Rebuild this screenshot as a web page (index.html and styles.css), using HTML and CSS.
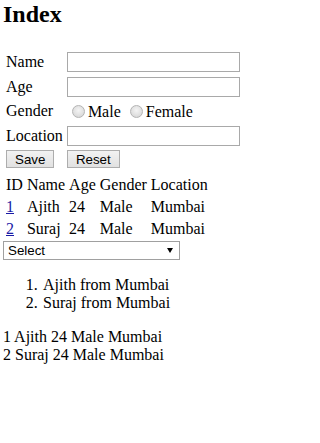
FILE: index.html
```html
<!DOCTYPE html>
<html lang="en">
<head>
  <meta charset="UTF-8">
  <meta name="viewport" content="width=device-width, initial-scale=1.0">
  <title>Index</title>
  <link rel="stylesheet" href="styles.css">
</head>
<body>
  <h2>Index</h2>

  <form class="person-form">
    <table class="form-table">
      <tr>
        <td>Name</td>
        <td><input type="text" class="field" name="Name"></td>
      </tr>
      <tr>
        <td>Age</td>
        <td><input type="text" class="field" name="Age"></td>
      </tr>
      <tr class="gender-row">
        <td>Gender</td>
        <td>
          <input type="radio" class="radio" name="Gender" value="Male">Male
          <input type="radio" class="radio" name="Gender" value="Female">Female
        </td>
      </tr>
      <tr>
        <td>Location</td>
        <td><input type="text" class="field" name="Location"></td>
      </tr>
      <tr class="button-row">
        <td><button type="button" class="btn">Save</button></td>
        <td><button type="reset" class="btn">Reset</button></td>
      </tr>
    </table>
  </form>

  <table class="people">
    <tr>
      <td>ID</td>
      <td>Name</td>
      <td>Age</td>
      <td>Gender</td>
      <td>Location</td>
    </tr>
    <tr>
      <td><a href="#">1</a></td>
      <td>Ajith</td>
      <td>24</td>
      <td>Male</td>
      <td>Mumbai</td>
    </tr>
    <tr>
      <td><a href="#">2</a></td>
      <td>Suraj</td>
      <td>24</td>
      <td>Male</td>
      <td>Mumbai</td>
    </tr>
  </table>

  <div class="picker">
    <span class="select-wrap">
      <select class="select">
        <option>Select</option>
        <option>Ajith</option>
        <option>Suraj</option>
      </select>
    </span>
  </div>

  <ol class="from-list">
    <li>Ajith from Mumbai</li>
    <li>Suraj from Mumbai</li>
  </ol>

  <div class="rows">
    <div>1 Ajith 24 Male Mumbai</div>
    <div>2 Suraj 24 Male Mumbai</div>
  </div>
</body>
</html>
```

FILE: styles.css
```css
body {
  margin: 0 0 0 3px;
  font-family: "Liberation Serif", "Times New Roman", serif;
  font-size: 16px;
  line-height: 18px;
  color: #000;
  background: #fff;
}

h2 {
  font-size: 24px;
  line-height: 28px;
  font-weight: bold;
  margin: 0 0 20px;
}

.person-form {
  margin: 0;
}

table {
  border-spacing: 2px;
}

td {
  padding: 1px;
}

.form-table td {
  height: 21px;
  box-sizing: content-box;
  vertical-align: middle;
}

.form-table .gender-row td {
  height: 20px;
}

.form-table .button-row td {
  height: 20px;
  vertical-align: top;
}

.field {
  width: 173px;
  height: 20px;
  box-sizing: border-box;
  border: 1px solid #a9a9a9;
  padding: 1px 2px;
  margin: 0;
  font-family: "Liberation Sans", Arial, sans-serif;
  font-size: 13.33px;
  vertical-align: middle;
}

.radio {
  appearance: none;
  -webkit-appearance: none;
  width: 13px;
  height: 13px;
  margin: 3px 3px 0 5px;
  border: 1px solid #b4b4b4;
  border-radius: 50%;
  background: radial-gradient(circle at 50% 40%, #f4f4f4 0%, #dcdcdc 70%, #cfcfcf 100%);
  box-sizing: border-box;
  vertical-align: -1px;
}

.btn {
  height: 18px;
  padding: 0 8px;
  margin: 0;
  border: 1px solid #adadad;
  border-radius: 0;
  background: linear-gradient(#f2f2f2, #e1e1e1);
  font-family: "Liberation Sans", Arial, sans-serif;
  font-size: 13.33px;
  color: #000;
  line-height: 15px;
  vertical-align: top;
}

.people a {
  color: #1a1aa6;
}

.picker {
  line-height: 19px;
}

.select-wrap {
  position: relative;
  display: inline-block;
  vertical-align: top;
}

.select {
  appearance: none;
  -webkit-appearance: none;
  width: 177px;
  height: 19px;
  margin: 0;
  padding: 0 4px;
  border: 1px solid #a0a0a0;
  border-radius: 0;
  background: #fff;
  font-family: "Liberation Sans", Arial, sans-serif;
  font-size: 13.33px;
  color: #000;
  display: block;
}

.select-wrap::after {
  content: "";
  position: absolute;
  right: 7px;
  top: 7px;
  border-left: 3px solid transparent;
  border-right: 3px solid transparent;
  border-top: 5px solid #000;
  pointer-events: none;
}

.from-list {
  margin: 16px 0;
  padding-left: 40px;
}

.from-list li::marker {
  content: counter(list-item) ".\00a0\200A";
}
```
